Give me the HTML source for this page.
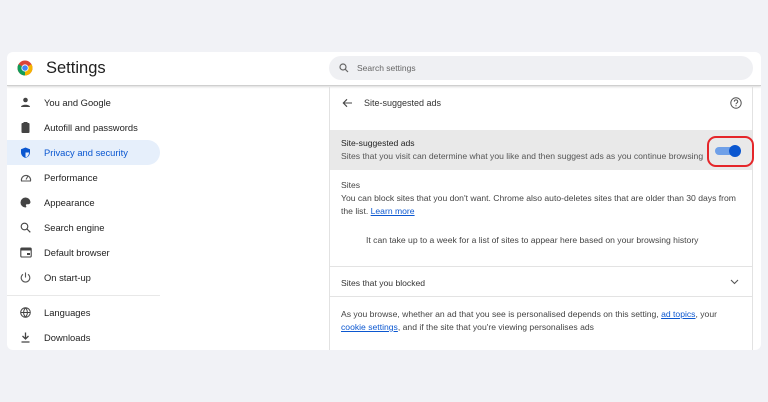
<!DOCTYPE html>
<html><head><style>
*{margin:0;padding:0;box-sizing:border-box}
body{width:768px;height:402px;background:#f1f2f6;font-family:"Liberation Sans",sans-serif;position:relative;overflow:hidden;color:#1f1f1f}
.card{position:absolute;left:7px;top:52px;width:754px;height:298px;background:#fff;border-radius:6px;overflow:hidden}
.hdr{position:absolute;left:0;top:0;width:754px;height:34px;border-bottom:1px solid #cfcfcf;box-shadow:0 1px 2px rgba(0,0,0,.15)}
.title{position:absolute;left:39px;top:7px;font-size:16.5px;color:#1f1f1f}
.search{position:absolute;left:322px;top:4px;width:424px;height:24px;background:#eff0f3;border-radius:12px;font-size:8.5px;color:#666}
.search span{position:absolute;left:28px;top:7px}
.nav{position:absolute;left:0;top:38px;width:153px}
.item{position:relative;height:25px;font-size:9.4px;color:#222;}
.item span{position:absolute;left:37px;top:7px}
.item svg{position:absolute;left:13px;top:7px}
.sel{background:#e6effb;border-radius:0 13px 13px 0;color:#0b57d0}
.sep{height:1px;background:#e8e8e8;margin:5px 0 4px}
.main{position:absolute;left:322px;top:35px;width:424px;height:263px;border-left:1px solid #e2e2e2;border-right:1px solid #e2e2e2}
.t{position:absolute;font-size:8.6px;color:#444;white-space:nowrap}
a{color:#0b57d0;text-decoration:underline}
</style></head><body>
<div class="card">
 <div class="hdr">
  <svg style="position:absolute;left:10px;top:8px" width="16" height="16" viewBox="0 0 16 16"><circle cx="8" cy="8" r="7.5" fill="#db4437"/><path d="M8 8 L1.5 4.3 A7.5 7.5 0 0 0 8 15.5Z" fill="#0f9d58"/><path d="M8 8 L14.5 4.3 A7.5 7.5 0 0 1 8 15.5Z" fill="#f4b400"/><circle cx="8" cy="8" r="3.6" fill="#fff"/><circle cx="8" cy="8" r="2.8" fill="#4285f4"/></svg>
  <div class="title">Settings</div>
  <div class="search"><svg style="position:absolute;left:10px;top:7px" width="10" height="10" viewBox="0 0 10 10"><circle cx="4" cy="4" r="3" stroke="#666" stroke-width="1.2" fill="none"/><path d="M6.3 6.3L9 9" stroke="#666" stroke-width="1.2"/></svg><span>Search settings</span></div>
 </div>
 <div class="nav">
  <div class="item"><svg width="11" height="11" viewBox="0 0 11 11"><circle cx="5.5" cy="3" r="2.3" fill="#444"/><path d="M1 10c0-3 9-3 9 0z" fill="#444"/></svg><span>You and Google</span></div>
  <div class="item"><svg width="11" height="11" viewBox="0 0 11 11"><rect x="1.5" y="1" width="8" height="10" rx="1" fill="#444"/><rect x="3.5" y="0" width="4" height="2" fill="#444"/></svg><span>Autofill and passwords</span></div>
  <div class="item sel"><svg width="11" height="11" viewBox="0 0 11 11"><path d="M5.5 0.5L10 2.3v3c0 3-2 5-4.5 5.7C3 10.3 1 8.3 1 5.3v-3z" fill="#0b57d0"/><path d="M5.5 1.5v9C7.5 10 9 8 9 5.5H5.5z" fill="#fff" opacity=".9"/></svg><span>Privacy and security</span></div>
  <div class="item"><svg width="12" height="11" viewBox="0 0 12 11"><path d="M1.5 9A4.6 4.6 0 1 1 10.5 9z" fill="none" stroke="#555" stroke-width="1.1"/><path d="M6 7.5L8 4" stroke="#555" stroke-width="1.1"/></svg><span>Performance</span></div>
  <div class="item"><svg width="11" height="11" viewBox="0 0 11 11"><path d="M5.5 0.5a5 5 0 0 0 0 10c1 0 1-1 .5-1.7-.5-.7 0-1.5 1-1.5h1.5A2.5 2.5 0 0 0 10.5 5 5 5 0 0 0 5.5.5z" fill="#444"/></svg><span>Appearance</span></div>
  <div class="item"><svg width="11" height="11" viewBox="0 0 11 11"><circle cx="4.5" cy="4.5" r="3.3" stroke="#444" stroke-width="1.1" fill="none"/><path d="M7 7l3.3 3.3" stroke="#444" stroke-width="1.2"/></svg><span>Search engine</span></div>
  <div class="item"><svg width="12" height="11" viewBox="0 0 12 11"><rect x="0.8" y="1" width="10.4" height="9" rx="1" stroke="#444" stroke-width="1.1" fill="none"/><rect x="1" y="1" width="10" height="2.5" fill="#444"/><rect x="7" y="6" width="3" height="2" fill="#444"/></svg><span>Default browser</span></div>
  <div class="item"><svg width="11" height="11" viewBox="0 0 11 11"><path d="M3 2.3A4.3 4.3 0 1 0 8 2.3" stroke="#555" stroke-width="1.1" fill="none"/><path d="M5.5 0.5v5" stroke="#555" stroke-width="1.1"/></svg><span>On start-up</span></div>
  <div class="sep"></div>
  <div class="item"><svg width="11" height="11" viewBox="0 0 11 11"><circle cx="5.5" cy="5.5" r="4.8" stroke="#444" stroke-width="1" fill="none"/><path d="M.7 5.5h9.6M5.5.7c-2.5 3-2.5 6.6 0 9.6M5.5.7c2.5 3 2.5 6.6 0 9.6" stroke="#444" stroke-width="1" fill="none"/></svg><span>Languages</span></div>
  <div class="item"><svg width="11" height="11" viewBox="0 0 11 11"><path d="M5.5 0.5v6M2.5 4l3 3 3-3" stroke="#444" stroke-width="1.3" fill="none"/><path d="M1.5 10h8" stroke="#444" stroke-width="1.3"/></svg><span>Downloads</span></div>
 </div>
 <div class="main">
  <svg style="position:absolute;left:12px;top:11px" width="11" height="10" viewBox="0 0 11 10"><path d="M10 5H1.5M5 1.3L1.3 5 5 8.7" stroke="#444" stroke-width="1.1" fill="none"/></svg>
  <div class="t" style="left:34px;top:11px;font-size:9px;color:#333">Site-suggested ads</div>
  <svg style="position:absolute;left:400px;top:10px" width="12" height="12" viewBox="0 0 12 12"><circle cx="6" cy="6" r="5.2" stroke="#555" stroke-width="1" fill="none"/><path d="M4.3 4.6a1.7 1.7 0 1 1 2.4 1.5c-.5.3-.7.6-.7 1.2" stroke="#555" stroke-width="1" fill="none"/><circle cx="6" cy="8.7" r=".6" fill="#555"/></svg>
  <div style="position:absolute;left:0;top:43px;width:422px;height:40px;background:#e9e9e9"></div>
  <div class="t" style="left:11px;top:51px;color:#222">Site-suggested ads</div>
  <div class="t" style="left:11px;top:64px;color:#555">Sites that you visit can determine what you like and then suggest ads as you continue browsing</div>
  <div style="position:absolute;left:377px;top:49px;width:47px;height:31px;border:2px solid #e5262a;border-radius:9px"></div>
  <div style="position:absolute;left:385px;top:60px;width:24px;height:8px;background:#6fa0e8;border-radius:4px"></div>
  <div style="position:absolute;left:399px;top:58px;width:12px;height:12px;background:#0b57d0;border-radius:50%"></div>
  <div class="t" style="left:11px;top:93px;color:#444">Sites</div>
  <div class="t" style="left:11px;top:106px;color:#444">You can block sites that you don't want. Chrome also auto-deletes sites that are older than 30 days from</div>
  <div class="t" style="left:11px;top:119px;color:#444">the list. <a>Learn more</a></div>
  <div class="t" style="left:36px;top:148px;color:#444">It can take up to a week for a list of sites to appear here based on your browsing history</div>
  <div style="position:absolute;left:0;top:179px;width:422px;height:1px;background:#e3e3e3"></div>
  <div class="t" style="left:11px;top:191px;color:#333">Sites that you blocked</div>
  <svg style="position:absolute;left:400px;top:192px" width="9" height="6" viewBox="0 0 9 6"><path d="M1 1l3.5 3.5L8 1" stroke="#555" stroke-width="1.1" fill="none"/></svg>
  <div style="position:absolute;left:0;top:209px;width:422px;height:1px;background:#e3e3e3"></div>
  <div class="t" style="left:11px;top:222px;color:#444">As you browse, whether an ad that you see is personalised depends on this setting, <a>ad topics</a>, your</div>
  <div class="t" style="left:11px;top:235px;color:#444"><a>cookie settings</a>, and if the site that you're viewing personalises ads</div>
 </div>
</div>
</body></html>
